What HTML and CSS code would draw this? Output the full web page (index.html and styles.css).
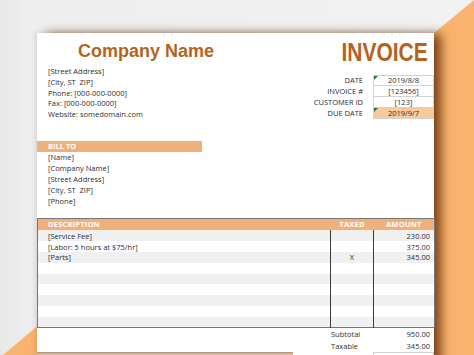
FILE: index.html
```html
<!DOCTYPE html>
<html>
<head>
<meta charset="utf-8">
<link rel="stylesheet" href="styles.css">
</head>
<body>
<div class="stage">
  <div class="paper">
    <header class="top">
      <div class="company">
        <h1 class="company-name">Company Name</h1>
        <div class="lines">
          <div>[Street Address]</div>
          <div>[City, ST&nbsp;&nbsp;ZIP]</div>
          <div>Phone: [000-000-0000]</div>
          <div>Fax: [000-000-0000]</div>
          <div>Website: somedomain.com</div>
        </div>
      </div>
      <div class="meta">
        <div class="title">INVOICE</div>
        <dl class="meta-grid">
          <dt>DATE</dt><dd class="flag">2019/8/8</dd>
          <dt>INVOICE #</dt><dd>[123456]</dd>
          <dt>CUSTOMER ID</dt><dd>[123]</dd>
          <dt>DUE DATE</dt><dd class="flag due">2019/9/7</dd>
        </dl>
      </div>
    </header>

    <section class="billto">
      <div class="bar">BILL TO</div>
      <div class="lines">
        <div>[Name]</div>
        <div>[Company Name]</div>
        <div>[Street Address]</div>
        <div>[City, ST&nbsp;&nbsp;ZIP]</div>
        <div>[Phone]</div>
      </div>
    </section>

    <table class="items">
      <colgroup><col class="c-desc"><col class="c-tax"><col class="c-amt"></colgroup>
      <thead>
        <tr><th class="desc">DESCRIPTION</th><th>TAXED</th><th>AMOUNT</th></tr>
      </thead>
      <tbody>
        <tr><td class="desc">[Service Fee]</td><td class="taxed"></td><td class="amount">230.00</td></tr>
        <tr><td class="desc">[Labor: 5 hours at $75/hr]</td><td class="taxed"></td><td class="amount">375.00</td></tr>
        <tr><td class="desc">[Parts]</td><td class="taxed">X</td><td class="amount">345.00</td></tr>
        <tr><td class="desc"></td><td class="taxed"></td><td class="amount"></td></tr>
        <tr><td class="desc"></td><td class="taxed"></td><td class="amount"></td></tr>
        <tr><td class="desc"></td><td class="taxed"></td><td class="amount"></td></tr>
        <tr><td class="desc"></td><td class="taxed"></td><td class="amount"></td></tr>
        <tr><td class="desc"></td><td class="taxed"></td><td class="amount"></td></tr>
        <tr><td class="desc"></td><td class="taxed"></td><td class="amount"></td></tr>
      </tbody>
    </table>

    <div class="totals">
      <div class="t-row"><span></span><span class="t-label">Subtotal</span><span class="t-val">950.00</span></div>
      <div class="t-row"><span></span><span class="t-label">Taxable</span><span class="t-val">345.00</span></div>
      <div class="t-row last"><span class="notes-bar"></span><span></span><span class="boxed"></span></div>
    </div>
  </div>
</div>
</body>
</html>
```

FILE: styles.css
```css
* { box-sizing: border-box; margin: 0; padding: 0; }

html, body { width: 474px; height: 355px; overflow: hidden; }

body {
  font-family: "Open Sans", "Liberation Sans", sans-serif;
  font-size: 7.5px;
  color: #2e2e2e;
  background: linear-gradient(to right, #e8e8e8 0, #eeeeee 30px, #f2f2f2 100%);
}

.stage {
  position: relative;
  width: 474px;
  height: 355px;
  overflow: hidden;
  padding: 33px 0 0 37px;
}

.stage::before {
  content: "";
  position: absolute;
  inset: 0;
  background: #fab36e;
  clip-path: polygon(474px 0, 474px 355px, 3px 355px, 42px 322px, 42px 40px, 434px 33px);
}

.paper {
  position: relative;
  width: 397px;
  height: 340px;
  background: #fff;
  box-shadow: 8px 0 10px -1px rgba(90, 40, 0, 0.8), -2px -1px 5px rgba(0, 0, 0, 0.08);
}

.lines div { height: 10.8px; line-height: 10.8px; white-space: nowrap; }

/* top */
.top { display: flex; justify-content: space-between; }

.company { padding: 7px 0 0 11px; }

.company-name {
  font-family: "Liberation Sans", Arial, sans-serif;
  font-weight: bold;
  font-size: 18px;
  line-height: 22px;
  color: #b4631f;
  margin-left: 30px;
}

.company .lines { margin-top: 4px; }

.meta {
  display: flex;
  flex-direction: column;
  align-items: flex-end;
  padding-top: 6px;
}

.title {
  font-family: "Liberation Sans", Arial, sans-serif;
  font-weight: bold;
  font-size: 25px;
  line-height: 26px;
  color: #b4631f;
  transform: scaleX(0.84);
  transform-origin: right center;
  margin-right: 6px;
  margin-bottom: 10px;
}

.meta-grid {
  display: grid;
  grid-template-columns: auto 61px;
  column-gap: 10px;
}

.meta-grid dt {
  text-align: right;
  height: 11px;
  line-height: 11px;
}

.meta-grid dd {
  position: relative;
  height: 11px;
  line-height: 10px;
  text-align: center;
  border: 1px solid #d2d2d2;
  border-top-width: 0;
}

.meta-grid dd:first-of-type { border-top-width: 1px; line-height: 9px; }

.meta-grid dd.due { background: #f8c99d; }

.meta-grid dd.flag::before {
  content: "";
  position: absolute;
  left: 0;
  top: 0;
  border-top: 4px solid #1f7a36;
  border-right: 4px solid transparent;
}

/* bill to */
.billto { margin-top: 21px; }

.bar {
  width: 165px;
  height: 11.5px;
  line-height: 11.5px;
  background: #f0b07a;
  color: #fff;
  font-weight: bold;
  padding-left: 11px;
}

.billto .lines { padding-left: 11px; }

/* items */
.items {
  margin-top: 11.5px;
  width: 397px;
  border-collapse: collapse;
  table-layout: fixed;
  border: 1px solid #777;
}

.c-desc { width: 293px; }
.c-tax { width: 43px; }
.c-amt { width: 61px; }

.items th {
  height: 12px;
  line-height: 11px;
  padding: 0;
  background: #f0b07a;
  color: #fff;
  font-weight: bold;
  text-align: center;
  letter-spacing: 0.2px;
}

.items th.desc { text-align: left; padding-left: 10px; }

.items td {
  height: 10.8px;
  line-height: 10px;
  padding: 0;
  white-space: nowrap;
}

.items tbody tr:nth-child(odd) td { background: #f0f0f0; }

.items td.desc { padding-left: 10px; }
.items td.taxed { text-align: center; border-left: 1px solid #3c3c3c; }
.items td.amount { text-align: right; padding-right: 4px; border-left: 1px solid #3c3c3c; }

/* totals */
.totals { margin-top: 0; }

.t-row {
  display: grid;
  grid-template-columns: 293px 43px 61px;
  height: 12px;
  line-height: 12px;
}

.t-label { padding-left: 1px; white-space: nowrap; }
.t-val { text-align: right; padding-right: 4px; }

.notes-bar {
  width: 256px;
  background: #f0b07a;
  border-top: 1px solid #9a9a9a;
}

.boxed { border: 1px solid #d2d2d2; }
```
